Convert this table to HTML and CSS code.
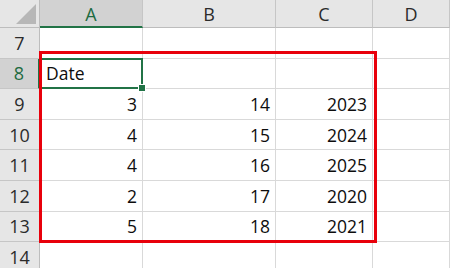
FILE: index.html
```html
<!DOCTYPE html>
<html lang="en">
<head>
    <meta charset="UTF-8">
    <meta name="viewport" content="width=device-width, initial-scale=1.0">
    <title>Sheet1</title>
    <link rel="stylesheet" href="styles.css">
</head>
<body>
    <div class="sheet">
        <div class="grid">
            <div class="corner"><span class="corner-tri"></span></div>
            <div class="col-head active">A</div>
            <div class="col-head">B</div>
            <div class="col-head">C</div>
            <div class="col-head">D</div>

            <div class="row-head">7</div>
            <div class="cell"></div>
            <div class="cell"></div>
            <div class="cell"></div>
            <div class="cell"></div>

            <div class="row-head active">8</div>
            <div class="cell selected">Date<span class="fill-handle"></span></div>
            <div class="cell"></div>
            <div class="cell"></div>
            <div class="cell"></div>

            <div class="row-head">9</div>
            <div class="cell num">3</div>
            <div class="cell num">14</div>
            <div class="cell num">2023</div>
            <div class="cell"></div>

            <div class="row-head">10</div>
            <div class="cell num">4</div>
            <div class="cell num">15</div>
            <div class="cell num">2024</div>
            <div class="cell"></div>

            <div class="row-head">11</div>
            <div class="cell num">4</div>
            <div class="cell num">16</div>
            <div class="cell num">2025</div>
            <div class="cell"></div>

            <div class="row-head">12</div>
            <div class="cell num">2</div>
            <div class="cell num">17</div>
            <div class="cell num">2020</div>
            <div class="cell"></div>

            <div class="row-head">13</div>
            <div class="cell num">5</div>
            <div class="cell num">18</div>
            <div class="cell num">2021</div>
            <div class="cell"></div>

            <div class="row-head">14</div>
            <div class="cell"></div>
            <div class="cell"></div>
            <div class="cell"></div>
            <div class="cell"></div>
        </div>
        <!-- highlight around the data range -->
        <div class="highlight"></div>
    </div>
</body>
</html>
```

FILE: styles.css
```css
body {
    margin: 0;
    background-color: #ffffff;
    font-family: "Open Sans", "Liberation Sans", sans-serif;
    overflow: hidden;
}

.sheet {
    position: relative;
    width: 450px;
    height: 268px;
    overflow: hidden;
}

.grid {
    display: grid;
    grid-template-columns: 40px 103px 133px 97px 77px;
    grid-template-rows: 28px repeat(8, 30.6px);
}

.corner,
.col-head,
.row-head {
    background-color: #e6e6e6;
    color: #2b2b2b;
    box-sizing: border-box;
    display: flex;
    align-items: center;
    justify-content: center;
    font-size: 18px;
}

.corner {
    position: relative;
    border-right: 1px solid #bdbdbd;
    border-bottom: 1px solid #bdbdbd;
}

.corner-tri {
    position: absolute;
    right: 3px;
    bottom: 3px;
    width: 0;
    height: 0;
    border-left: 20px solid transparent;
    border-bottom: 20px solid #b7b7b7;
}

.col-head {
    border-right: 1px solid #c6c6c6;
    border-bottom: 1px solid #bdbdbd;
    padding-top: 1px;
}

.col-head.active {
    background-color: #d2d2d2;
    color: #1e6b41;
    border-bottom: 2px solid #217346;
}

.row-head {
    border-right: 1px solid #bdbdbd;
    border-bottom: 1px solid #c6c6c6;
}

.row-head.active {
    background-color: #d2d2d2;
    color: #1e6b41;
    border-right: 2px solid #217346;
}

.cell {
    position: relative;
    box-sizing: border-box;
    border-right: 1px solid #d9d9d9;
    border-bottom: 1px solid #d9d9d9;
    color: #0d0d0d;
    font-size: 17.5px;
    display: flex;
    align-items: center;
    padding: 0 5px;
}

.cell.num {
    justify-content: flex-end;
}

.cell.selected {
    border: 2px solid #217346;
    margin: -1px 0 0 -1px;
    padding-left: 5px;
}

.fill-handle {
    position: absolute;
    right: -5px;
    bottom: -5px;
    width: 6px;
    height: 6px;
    background-color: #217346;
    border: 1px solid #ffffff;
    z-index: 2;
}

.highlight {
    position: absolute;
    left: 39px;
    top: 51px;
    width: 332px;
    height: 186px;
    border: 3px solid #e8000b;
    pointer-events: none;
}
```
